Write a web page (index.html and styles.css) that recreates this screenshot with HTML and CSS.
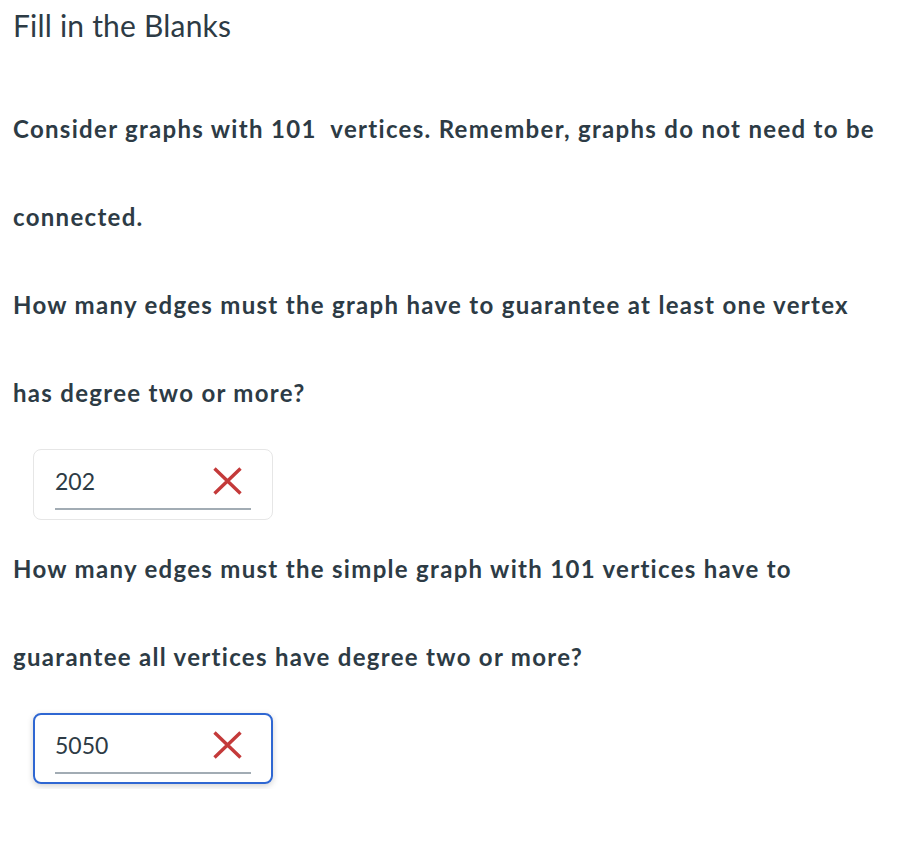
FILE: index.html
```html
<!DOCTYPE html>
<html lang="en">
<head>
    <meta charset="UTF-8">
    <title>Fill in the Blanks</title>
    <link rel="stylesheet" href="styles.css">
</head>
<body>
    <div class="question">
        <h2 class="title">Fill in the Blanks</h2>
        <p>Consider graphs with 101&nbsp; vertices. Remember, graphs do not need to be connected.</p>
        <p>How many edges must the graph have to guarantee at least one vertex has degree two or more?</p>
        <div class="answer">
            <div class="blank">
                <span class="value">202</span>
                <svg class="wrong" width="29" height="28" viewBox="0 0 29 28">
                    <path d="M1.5 1.5 L27.5 26.5 M27.5 1.5 L1.5 26.5" stroke="#c43a3a" stroke-width="3.4" fill="none"/>
                </svg>
            </div>
        </div>
        <p>How many edges must the simple graph with 101 vertices have to guarantee all vertices have degree two or more?</p>
        <div class="answer focused">
            <div class="blank">
                <span class="value">5050</span>
                <svg class="wrong" width="29" height="28" viewBox="0 0 29 28">
                    <path d="M1.5 1.5 L27.5 26.5 M27.5 1.5 L1.5 26.5" stroke="#c43a3a" stroke-width="3.4" fill="none"/>
                </svg>
            </div>
        </div>
    </div>
</body>
</html>
```

FILE: styles.css
```css
body {
    margin: 0;
    background: #fff;
    font-family: 'Lato', sans-serif;
    color: #2d3b45;
}

.question {
    width: 872px;
    padding: 0 13px;
}

.title {
    margin: 0;
    padding-top: 5px;
    font-size: 30px;
    font-weight: normal;
    letter-spacing: 0.2px;
    line-height: 40px;
    height: 80px;
}

p {
    margin: 0;
    font-size: 24px;
    font-weight: bold;
    letter-spacing: 1.3px;
    line-height: 88px;
}

.answer {
    width: 196px;
    margin: 12px 0 5px 20px;
    padding: 16px 21px 9px 21px;
    border: 1px solid #e6e6e6;
    border-radius: 8px;
}

.answer.focused {
    border: 2px solid #2f67d2;
    padding: 15px 20px 8px 20px;
    box-shadow: 0 2px 6px rgba(0, 0, 0, 0.18);
}

.blank {
    display: flex;
    justify-content: space-between;
    align-items: center;
    height: 30px;
    padding-bottom: 12px;
    border-bottom: 2px solid #a2acb4;
}

.value {
    font-size: 23px;
    line-height: 30px;
}

.wrong {
    margin-right: 9px;
}
```
